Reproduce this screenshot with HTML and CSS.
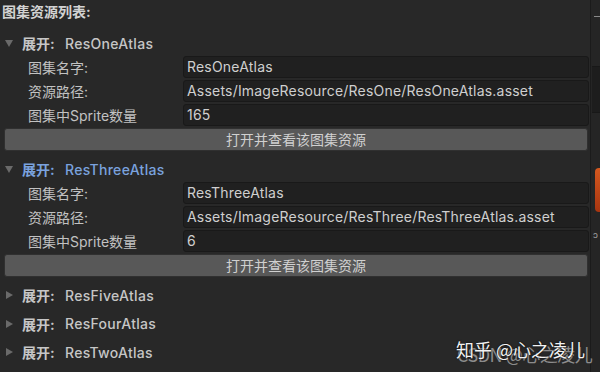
FILE: index.html
```html
<!DOCTYPE html>
<html lang="zh-CN">
<head>
	<meta charset="UTF-8">
	<title>图集资源列表</title>
	<link rel="stylesheet" href="styles.css">
</head>
<body>
<div class="window">
	<div class="panel">
		<div class="title">图集资源列表:</div>

		<div class="atlas">
			<div class="fold open"><span class="arrow"></span><span class="key">展开:</span><span class="name">ResOneAtlas</span></div>
			<div class="field"><span class="label">图集名字:</span><span class="box">ResOneAtlas</span></div>
			<div class="field"><span class="label">资源路径:</span><span class="box">Assets/ImageResource/ResOne/ResOneAtlas.asset</span></div>
			<div class="field"><span class="label">图集中Sprite数量</span><span class="box">165</span></div>
			<div class="btn">打开并查看该图集资源</div>
		</div>

		<div class="atlas">
			<div class="fold open active"><span class="arrow"></span><span class="key">展开:</span><span class="name">ResThreeAtlas</span></div>
			<div class="field"><span class="label">图集名字:</span><span class="box">ResThreeAtlas</span></div>
			<div class="field"><span class="label">资源路径:</span><span class="box">Assets/ImageResource/ResThree/ResThreeAtlas.asset</span></div>
			<div class="field"><span class="label">图集中Sprite数量</span><span class="box">6</span></div>
			<div class="btn">打开并查看该图集资源</div>
		</div>

		<div class="atlas closed">
			<div class="fold"><span class="arrow"></span><span class="key">展开:</span><span class="name">ResFiveAtlas</span></div>
		</div>
		<div class="atlas closed">
			<div class="fold"><span class="arrow"></span><span class="key">展开:</span><span class="name">ResFourAtlas</span></div>
		</div>
		<div class="atlas closed">
			<div class="fold"><span class="arrow"></span><span class="key">展开:</span><span class="name">ResTwoAtlas</span></div>
		</div>
	</div>
	<div class="side">
		<span class="tick"></span>
		<span class="slots"></span>
		<span class="tab"></span>
		<span class="mark">ɔ</span>
	</div>
	<div class="watermark">
		<span class="csdn">CSDN @心之凌儿</span>
		<span class="zhihu">知乎 @心之凌儿</span>
	</div>
</div>
</body>
</html>
```

FILE: styles.css
```css
*{
	box-sizing: border-box;
}
body{
	margin: 0;
	background: #282828;
	font-family: Inter, "Noto Sans CJK SC", sans-serif;
	font-size: 14px;
	color: #c4c4c4;
}
.window{
	position: relative;
	display: flex;
	width: 600px;
	height: 372px;
	overflow: hidden;
}
.panel{
	width: 590px;
	padding-right: 1px;
}
.title{
	height: 24px;
	line-height: 24px;
	padding-left: 2px;
	font-weight: bold;
	color: #d2d2d2;
}
.atlas{
	margin-top: 8px;
}
.atlas + .atlas{
	margin-top: 7px;
}
.atlas.closed + .atlas.closed{
	margin-top: 6.5px;
}
.fold{
	display: flex;
	align-items: center;
	height: 22px;
	color: #c6c6c6;
}
.arrow{
	width: 0;
	height: 0;
	margin: 0 9px 0 5px;
	border-left: 4px solid transparent;
	border-right: 4px solid transparent;
	border-top: 7px solid #6a6a6a;
}
.fold:not(.open) .arrow{
	margin: 0 9px 0 6px;
	border-top: 4px solid transparent;
	border-bottom: 4px solid transparent;
	border-left: 7px solid #6a6a6a;
	border-right: none;
}
.key{
	width: 43px;
	font-weight: bold;
}
.name{
	font-weight: 500;
	letter-spacing: 0.3px;
}
.active{
	color: #7aa2de;
}
.field{
	display: flex;
	align-items: center;
	height: 22px;
	margin-top: 2px;
	padding-left: 28px;
}
.label{
	width: 155px;
	color: #c2c2c2;
}
.box{
	flex: 1;
	height: 22px;
	line-height: 20px;
	padding-left: 3px;
	background: #202020;
	border: 1px solid #191919;
	border-radius: 3px;
	color: #cfcfcf;
	letter-spacing: 0.2px;
	white-space: nowrap;
}
.btn{
	height: 23px;
	line-height: 21px;
	margin: 2px 1px 0 4px;
	background: #585858;
	border: 1px solid #303030;
	border-radius: 3px;
	text-align: center;
	color: #d0d0d0;
}
.side{
	position: relative;
	width: 10px;
	background: #252525;
	border-left: 1px solid #1b1b1b;
}
.tick{
	position: absolute;
	top: 16px;
	left: 3px;
	width: 7px;
	height: 1px;
	background: #8a8a8a;
}
.slots{
	position: absolute;
	top: 66px;
	left: 1px;
	width: 9px;
	height: 47px;
	background: #1d1d1d;
	border-top: 1px solid #181818;
	border-bottom: 1px solid #181818;
}
.tab{
	position: absolute;
	top: 168px;
	left: 4px;
	width: 8px;
	height: 44px;
	border-radius: 4px 0 0 4px;
	background: linear-gradient(#d4581f, #a83510);
}
.mark{
	position: absolute;
	top: 229px;
	left: 2px;
	font-size: 9px;
	color: #9a9a9a;
}
.watermark{
	position: absolute;
	left: 456px;
	top: 336px;
	width: 140px;
	height: 30px;
}
.zhihu, .csdn{
	position: absolute;
	left: 0;
	white-space: nowrap;
	font-family: "Noto Sans CJK SC", sans-serif;
}
.zhihu{
	top: 0;
	font-size: 18px;
	color: #f2f2f2;
	text-shadow: 0 0 2px #000;
}
.csdn{
	top: 5px;
	left: 1px;
	font-size: 18px;
	color: #8c8c8c;
	letter-spacing: -0.5px;
}
```
